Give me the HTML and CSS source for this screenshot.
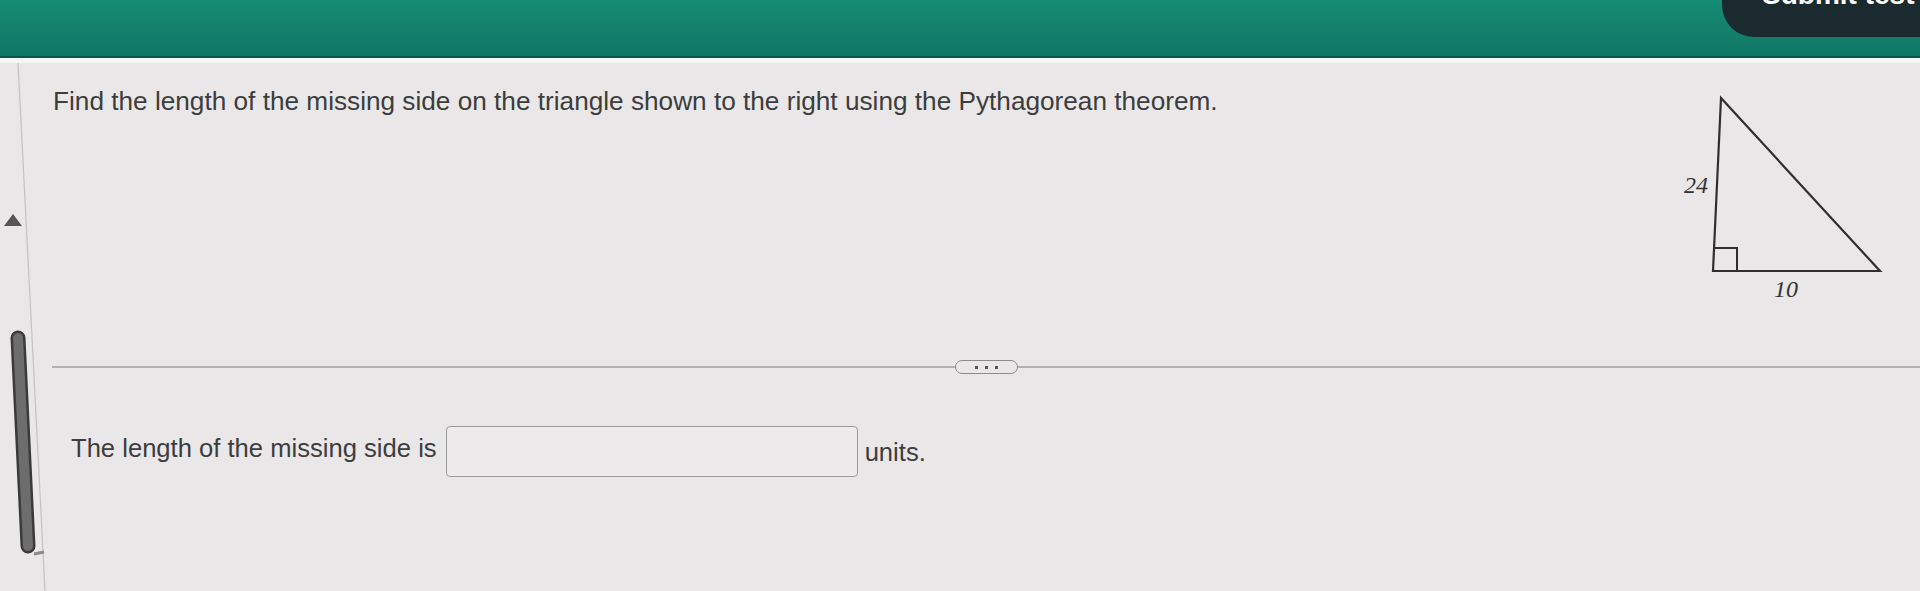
FILE: index.html
```html
<!DOCTYPE html>
<html lang="en">
<head>
<meta charset="utf-8">
<title>Pythagorean theorem question</title>
<link rel="stylesheet" href="styles.css">
</head>
<body>
<header class="topbar">
  <div class="topbar-fill"></div>
  <button class="submit-btn" type="button"><span class="submit-label">Submit test</span></button>
</header>
<div class="strip"></div>
<div class="page">
  <aside class="sidebar">
    <svg class="sidebar-svg" width="48" height="528" viewBox="0 0 48 528">
      <line x1="18" y1="0" x2="45" y2="528" stroke="#c4c3c3" stroke-width="1.2"/>
      <polygon points="4,163 22,163 13,151" fill="#555"/>
      <line x1="18" y1="275" x2="28" y2="483" stroke="#3a3a3a" stroke-width="15" stroke-linecap="round"/>
      <line x1="18" y1="275" x2="28" y2="483" stroke="#6e6d6d" stroke-width="10" stroke-linecap="round"/>
      <line x1="34" y1="491" x2="44" y2="489" stroke="#8a8a8a" stroke-width="3"/>
    </svg>
  </aside>
  <main class="content">
    <section class="question">
      <p class="question-text">Find the length of the missing side on the triangle shown to the right using the Pythagorean theorem.</p>
      <svg class="figure" width="215" height="210" viewBox="0 0 215 210">
        <path d="M41,3 L33,176 L200,176 Z" fill="none" stroke="#2f2f2f" stroke-width="2.2" stroke-linejoin="miter"/>
        <path d="M33,153 H57 V176" fill="none" stroke="#2f2f2f" stroke-width="2"/>
        <text class="fig-label" x="28" y="98" text-anchor="end">24</text>
        <text class="fig-label" x="106" y="202" text-anchor="middle">10</text>
      </svg>
    </section>
    <div class="divider">
      <div class="divider-line"></div>
      <div class="pill"><span class="dot"></span><span class="dot"></span><span class="dot"></span></div>
      <div class="divider-line"></div>
    </div>
    <section class="answer">
      <span class="answer-text">The length of the missing side is</span>
      <input class="answer-box" type="text" aria-label="answer">
      <span class="answer-text units">units.</span>
    </section>
  </main>
</div>
</body>
</html>
```
FILE: styles.css
```css
html, body {
  margin: 0;
  padding: 0;
  height: 591px;
  overflow: hidden;
}
body {
  background: #e9e7e8;
  font-family: "Liberation Sans", Arial, sans-serif;
  color: #3d3d3d;
}
.topbar {
  display: flex;
  height: 56px;
  background: linear-gradient(#168b74, #117665);
  border-bottom: 2px solid #0b5747;
  overflow: hidden;
}
.topbar-fill {
  flex: 1;
}
.submit-btn {
  width: 198px;
  height: 37px;
  margin: 0;
  border: none;
  background: #1b2a2f;
  border-bottom-left-radius: 32px;
  padding: 0 0 0 40px;
  text-align: left;
  overflow: hidden;
  display: flex;
  align-items: flex-start;
}
.submit-label {
  display: block;
  margin-top: -20px;
  font-family: "Liberation Sans", Arial, sans-serif;
  font-weight: bold;
  font-size: 28px;
  line-height: 30px;
  color: #fff;
  white-space: nowrap;
}
.strip {
  height: 5px;
  background: #f2f7f6;
}
.page {
  display: flex;
  height: 528px;
}
.sidebar {
  width: 44px;
  flex: none;
}
.sidebar-svg {
  display: block;
}
.content {
  flex: 1;
  display: flex;
  flex-direction: column;
}
.question {
  display: flex;
  justify-content: space-between;
  height: 296px;
}
.question-text {
  margin: 23px 0 0 9px;
  font-size: 26.2px;
  line-height: 30px;
}
.figure {
  margin: 32px 25px 0 0;
  flex: none;
}
.fig-label {
  font-family: "Liberation Serif", "Times New Roman", serif;
  font-style: italic;
  font-size: 24px;
  fill: #333;
}
.divider {
  display: flex;
  align-items: center;
  margin-left: 8px;
  height: 16px;
}
.divider-line {
  flex: 1;
  height: 2px;
  background: #b2b1b1;
}
.pill {
  width: 61px;
  height: 12px;
  border: 1.5px solid #8c8b8b;
  border-radius: 8px;
  display: flex;
  align-items: center;
  justify-content: center;
  gap: 7px;
}
.dot {
  width: 3px;
  height: 3px;
  background: #555;
}
.answer {
  display: flex;
  align-items: center;
  margin: 51px 0 0 27px;
}
.answer-text {
  font-size: 25.6px;
  line-height: 30px;
  margin-bottom: 7px;
}
.answer-box {
  width: 412px;
  height: 51px;
  box-sizing: border-box;
  margin: 0 7px 0 9px;
  border: 1.5px solid #9b9a9a;
  border-radius: 4px;
  background: #eceaeb;
  padding: 0;
}
.units {
  margin-bottom: 0;
}
```
